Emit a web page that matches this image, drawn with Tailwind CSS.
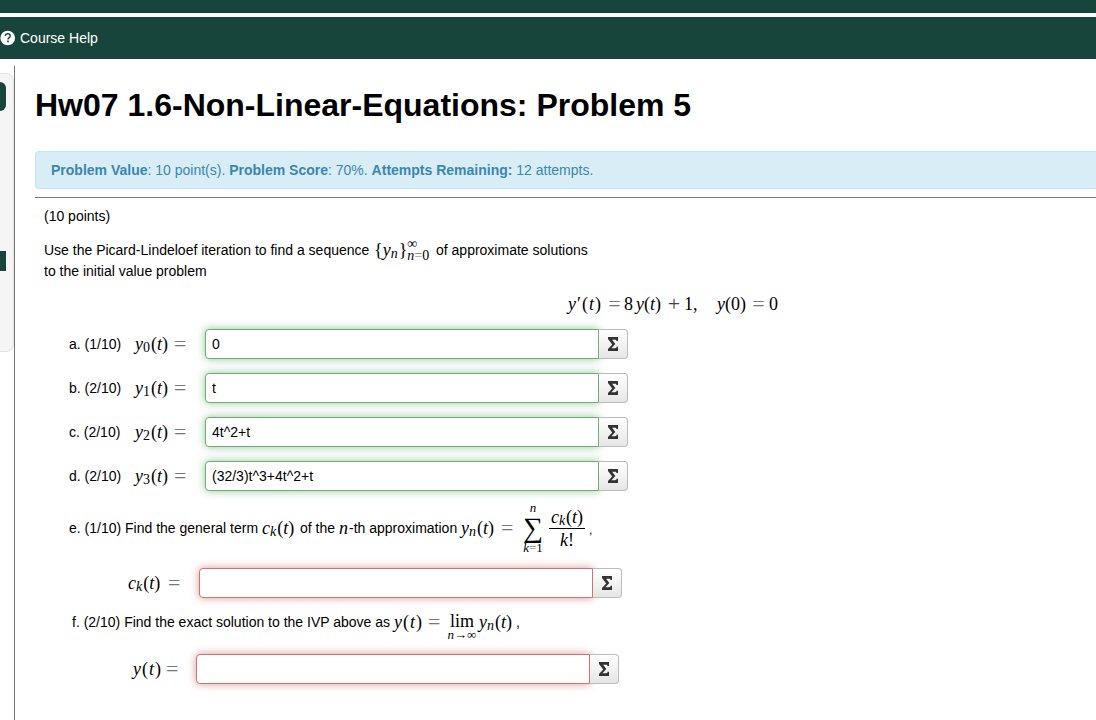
<!DOCTYPE html>
<html lang="en">
<head>
<meta charset="utf-8">
<title>Hw07 1.6-Non-Linear-Equations: Problem 5</title>
<script src="https://cdn.jsdelivr.net/npm/@tailwindcss/browser@4"></script>
</head>
<body class="min-h-screen flex flex-col overflow-x-hidden bg-white text-black text-sm font-['Liberation_Sans',Arial,sans-serif]">
<header>
  <div class="h-[13px] bg-[#18453b]"></div>
  <nav class="mt-1 h-[42px] flex items-center bg-[#18453b] text-white">
    <a href="#" class="flex items-center gap-1">
      <svg class="w-4 h-4" viewBox="0 0 16 16" fill="none"><circle cx="7.7" cy="8" r="7.3" fill="#fff"/><path d="M5.4 6C5.4 4.5 6.4 3.8 7.8 3.8s2.4.8 2.4 2.1c0 1.7-2.2 1.8-2.2 3.5" stroke="#18453b" stroke-width="1.4"/><path d="M7.2 10.6h1.6v1.6H7.2z" fill="#18453b"/></svg>
      <span>Course Help</span>
    </a>
  </nav>
</header>
<div class="flex grow pt-[7px]">
  <aside class="w-[14px] shrink-0 pt-[7px]">
    <div class="h-[279px] rounded-r-lg border border-l-0 border-[#e3e3e3] bg-[#f5f5f5] pt-2">
      <div class="w-[6px] h-[29px] rounded-r-md bg-[#18453b]"></div>
      <div class="mt-[140px] w-[6px] h-5 bg-[#18453b]"></div>
    </div>
  </aside>
  <main class="grow min-w-0 border-l border-[#777] pl-5">
    <h1 class="pt-[19px] text-[32px] leading-10 font-bold whitespace-nowrap">Hw07 1.6-Non-Linear-Equations: Problem 5</h1>
    <div class="mt-[26px] h-[38px] flex items-center rounded-l border border-r-0 border-[#bce8f1] bg-[#d9edf7] pl-[15px] text-[#3a87ad]">
      <p><b>Problem Value</b>: 10 point(s). <b>Problem Score</b>: 70%. <b>Attempts Remaining:</b> 12 attempts.</p>
    </div>
    <hr class="mt-2 border-[#777]">
    <form class="pl-[9px] whitespace-nowrap">
      <p class="pt-2 leading-5">(10 points)</p>
      <div class="mt-3 h-6 flex items-center">
        <span class="w-[330px]">Use the Picard-Lindeloef iteration to find a sequence</span>
        <span class="w-[62px] flex items-center font-['Liberation_Serif',serif] text-lg leading-5"><span>{</span><i>y</i><i class="pt-2 text-sm leading-4">n</i><span class="pl-px">}</span><span class="flex flex-col text-sm leading-3"><span>∞</span><span><i>n</i><span class="text-[#777]">=</span>0</span></span></span>
        <span>of approximate solutions</span>
      </div>
      <p class="leading-[18px]">to the initial value problem</p>
      <div class="mt-2 h-8 flex items-center justify-center pl-[206px] font-['Liberation_Serif',serif] text-lg">
        <span class="w-[37px] flex gap-px"><i>y</i>′<span>(</span><i>t</i><span>)</span></span>
        <span class="w-[19px] text-center text-[22px] text-[#777]">=</span>
        <span class="w-[12px]">8</span>
        <span class="w-[28px] flex"><i>y</i><span>(</span><i>t</i><span>)</span></span>
        <span class="w-[20px] text-center text-[22px] text-[#444]">+</span>
        <span class="w-[33px]">1,</span>
        <span class="w-[31px] flex"><i>y</i><span>(</span>0<span>)</span></span>
        <span class="w-[21px] text-center text-[22px] text-[#777]">=</span>
        <span>0</span>
      </div>

      <div class="mt-[9px] flex flex-col gap-[14px] pl-[25px]">
        <div class="flex h-[30px] items-center">
          <label for="a" class="w-[136px] h-7 flex items-center"><span class="w-[66px]">a. (1/10)</span><span class="w-[39px] flex items-center font-['Liberation_Serif',serif] text-lg leading-5"><i>y</i><span class="pt-2 pr-px text-sm leading-3">0</span><span>(</span><i>t</i><span>)</span></span><span class="font-['Liberation_Serif',serif] text-[22px] text-[#777]">=</span></label>
          <input id="a" value="0" class="w-[394px] h-[30px] rounded-l border border-[#6fae73] bg-white px-[6px] shadow-[0_0_8px_rgba(81,153,87,0.6)] outline-none">
          <button type="button" aria-label="Equation editor" class="w-[29px] h-[30px] flex items-center justify-center rounded-r border border-l-0 border-[#bbb] bg-linear-to-b from-white to-[#e6e6e6]"><svg class="w-3 h-[14px]" viewBox="0 0 12 14" fill="#333"><path d="M1 0h10v4H9.5C9.3 3 9 2.7 8 2.7H5.1L8.3 7l-3.9 4.2H8c1 0 1.5-.4 1.7-1.4H11V14H1v-2L5.2 7.4 1 2z"/></svg></button>
        </div>
        <div class="flex h-[30px] items-center">
          <label for="b" class="w-[136px] h-7 flex items-center"><span class="w-[66px]">b. (2/10)</span><span class="w-[39px] flex items-center font-['Liberation_Serif',serif] text-lg leading-5"><i>y</i><span class="pt-2 pr-px text-sm leading-3">1</span><span>(</span><i>t</i><span>)</span></span><span class="font-['Liberation_Serif',serif] text-[22px] text-[#777]">=</span></label>
          <input id="b" value="t" class="w-[394px] h-[30px] rounded-l border border-[#6fae73] bg-white px-[6px] shadow-[0_0_8px_rgba(81,153,87,0.6)] outline-none">
          <button type="button" aria-label="Equation editor" class="w-[29px] h-[30px] flex items-center justify-center rounded-r border border-l-0 border-[#bbb] bg-linear-to-b from-white to-[#e6e6e6]"><svg class="w-3 h-[14px]" viewBox="0 0 12 14" fill="#333"><path d="M1 0h10v4H9.5C9.3 3 9 2.7 8 2.7H5.1L8.3 7l-3.9 4.2H8c1 0 1.5-.4 1.7-1.4H11V14H1v-2L5.2 7.4 1 2z"/></svg></button>
        </div>
        <div class="flex h-[30px] items-center">
          <label for="c" class="w-[136px] h-7 flex items-center"><span class="w-[66px]">c. (2/10)</span><span class="w-[39px] flex items-center font-['Liberation_Serif',serif] text-lg leading-5"><i>y</i><span class="pt-2 pr-px text-sm leading-3">2</span><span>(</span><i>t</i><span>)</span></span><span class="font-['Liberation_Serif',serif] text-[22px] text-[#777]">=</span></label>
          <input id="c" value="4t^2+t" class="w-[394px] h-[30px] rounded-l border border-[#6fae73] bg-white px-[6px] shadow-[0_0_8px_rgba(81,153,87,0.6)] outline-none">
          <button type="button" aria-label="Equation editor" class="w-[29px] h-[30px] flex items-center justify-center rounded-r border border-l-0 border-[#bbb] bg-linear-to-b from-white to-[#e6e6e6]"><svg class="w-3 h-[14px]" viewBox="0 0 12 14" fill="#333"><path d="M1 0h10v4H9.5C9.3 3 9 2.7 8 2.7H5.1L8.3 7l-3.9 4.2H8c1 0 1.5-.4 1.7-1.4H11V14H1v-2L5.2 7.4 1 2z"/></svg></button>
        </div>
        <div class="flex h-[30px] items-center">
          <label for="d" class="w-[136px] h-7 flex items-center"><span class="w-[66px]">d. (2/10)</span><span class="w-[39px] flex items-center font-['Liberation_Serif',serif] text-lg leading-5"><i>y</i><span class="pt-2 pr-px text-sm leading-3">3</span><span>(</span><i>t</i><span>)</span></span><span class="font-['Liberation_Serif',serif] text-[22px] text-[#777]">=</span></label>
          <input id="d" value="(32/3)t^3+4t^2+t" class="w-[394px] h-[30px] rounded-l border border-[#6fae73] bg-white px-[6px] shadow-[0_0_8px_rgba(81,153,87,0.6)] outline-none">
          <button type="button" aria-label="Equation editor" class="w-[29px] h-[30px] flex items-center justify-center rounded-r border border-l-0 border-[#bbb] bg-linear-to-b from-white to-[#e6e6e6]"><svg class="w-3 h-[14px]" viewBox="0 0 12 14" fill="#333"><path d="M1 0h10v4H9.5C9.3 3 9 2.7 8 2.7H5.1L8.3 7l-3.9 4.2H8c1 0 1.5-.4 1.7-1.4H11V14H1v-2L5.2 7.4 1 2z"/></svg></button>
        </div>
      </div>

      <div class="mt-[11px] h-[52px] flex items-center pl-[25px]">
        <span class="w-[193px]">e. (1/10) Find the general term</span>
        <span class="w-[38px] flex items-center font-['Liberation_Serif',serif] text-lg leading-5"><i>c</i><i class="pt-2 pr-px text-sm leading-3">k</i><span>(</span><i>t</i><span>)</span></span>
        <span class="w-[39px]">of the</span>
        <i class="w-[10px] font-['Liberation_Serif',serif] text-lg leading-5">n</i>
        <span class="w-[112px]">-th approximation</span>
        <span class="w-[40px] flex items-center font-['Liberation_Serif',serif] text-lg leading-5"><i>y</i><i class="pt-2 pr-px text-sm leading-3">n</i><span>(</span><i>t</i><span>)</span></span>
        <span class="w-5 font-['Liberation_Serif',serif] text-[22px] text-[#777]">=</span>
        <span class="w-6 mr-1 flex flex-col items-center font-['Liberation_Serif',serif] text-[13px] leading-3"><i>n</i><span class="text-[28px] leading-[28px]">∑</span><span><i>k</i><span class="text-[#777]">=</span>1</span></span>
        <span class="w-[36px] flex flex-col items-center font-['Liberation_Serif',serif] text-lg leading-[22px]"><span class="w-full h-[23px] flex items-center justify-center border-b border-black leading-5"><i>c</i><i class="pt-2 pr-px text-sm leading-3">k</i><span>(</span><i>t</i><span>)</span></span><span><i>k</i>!</span></span>
        <span class="pl-1 pt-1 text-xs">,</span>
      </div>
      <div class="mt-[14px] flex h-[30px] items-center pl-[84px]">
        <label for="e" class="w-[71px] h-7 flex items-center font-['Liberation_Serif',serif] text-lg leading-5"><span class="w-10 flex items-center"><i>c</i><i class="pt-2 pr-px text-sm leading-3">k</i><span>(</span><i>t</i><span>)</span></span><span class="text-[22px]/7 text-[#777]">=</span></label>
        <input id="e" class="w-[394px] h-[30px] rounded-l border border-[#cf7272] bg-white px-[6px] shadow-[0_0_8px_rgba(191,84,84,0.6)] outline-none">
        <button type="button" aria-label="Equation editor" class="w-[29px] h-[30px] flex items-center justify-center rounded-r border border-l-0 border-[#bbb] bg-linear-to-b from-white to-[#e6e6e6]"><svg class="w-3 h-[14px]" viewBox="0 0 12 14" fill="#333"><path d="M1 0h10v4H9.5C9.3 3 9 2.7 8 2.7H5.1L8.3 7l-3.9 4.2H8c1 0 1.5-.4 1.7-1.4H11V14H1v-2L5.2 7.4 1 2z"/></svg></button>
      </div>
      <div class="mt-1 h-10 flex items-center pl-[28px]">
        <span class="w-[322px]">f. (2/10) Find the exact solution to the IVP above as</span>
        <span class="w-[34px] flex gap-px font-['Liberation_Serif',serif] text-lg leading-5"><i>y</i><span>(</span><i>t</i><span>)</span></span>
        <span class="w-[17px] font-['Liberation_Serif',serif] text-[22px] text-[#777]">=</span>
        <span class="w-[34px] pt-[10px] flex flex-col items-center font-['Liberation_Serif',serif] text-lg leading-4"><span>lim</span><span class="text-[13px] leading-3"><i>n</i>→∞</span></span>
        <span class="w-[37px] flex items-center font-['Liberation_Serif',serif] text-lg leading-5"><i>y</i><i class="pt-2 pr-px text-sm leading-3">n</i><span>(</span><i>t</i><span>)</span></span>
        <span>,</span>
      </div>
      <div class="mt-3 flex h-[30px] items-center pl-[89px]">
        <label for="f" class="w-[63px] h-7 flex items-center font-['Liberation_Serif',serif] text-lg leading-5"><span class="w-[33px] flex gap-px"><i>y</i><span>(</span><i>t</i><span>)</span></span><span class="text-[22px]/7 text-[#777]">=</span></label>
        <input id="f" class="w-[394px] h-[30px] rounded-l border border-[#cf7272] bg-white px-[6px] shadow-[0_0_8px_rgba(191,84,84,0.6)] outline-none">
        <button type="button" aria-label="Equation editor" class="w-[29px] h-[30px] flex items-center justify-center rounded-r border border-l-0 border-[#bbb] bg-linear-to-b from-white to-[#e6e6e6]"><svg class="w-3 h-[14px]" viewBox="0 0 12 14" fill="#333"><path d="M1 0h10v4H9.5C9.3 3 9 2.7 8 2.7H5.1L8.3 7l-3.9 4.2H8c1 0 1.5-.4 1.7-1.4H11V14H1v-2L5.2 7.4 1 2z"/></svg></button>
      </div>
    </form>
  </main>
</div>
</body>
</html>
